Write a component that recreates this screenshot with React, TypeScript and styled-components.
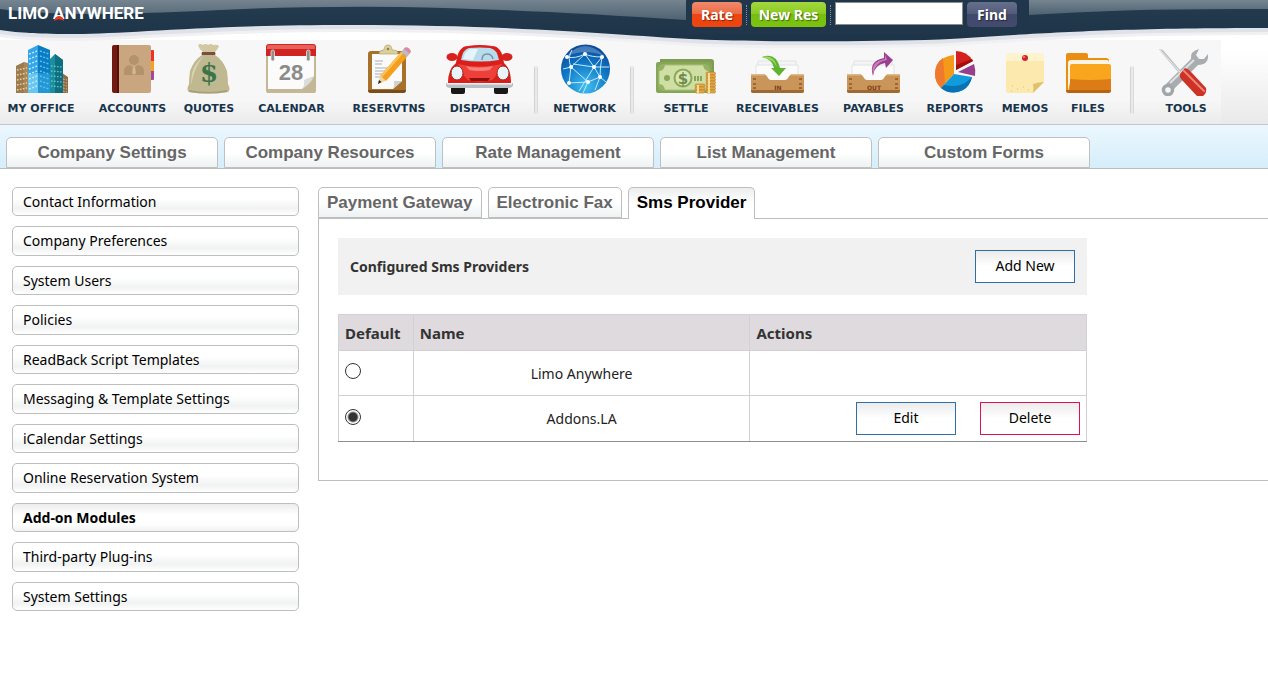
import React, { useState } from "react";
import styled, { createGlobalStyle, css } from "styled-components";

const uiFont = `"Noto Sans", "Open Sans", sans-serif`;
const headingFont = `"Liberation Sans", Arial, sans-serif`;
const labelFont = `"DejaVu Sans", Verdana, sans-serif`;

const GlobalStyle = createGlobalStyle`
  *, *::before, *::after { box-sizing: border-box; }
  body {
    margin: 0;
    background: #fff;
    color: #000;
    font-family: ${uiFont};
    font-size: 14px;
    overflow-x: hidden;
  }
  a { color: inherit; text-decoration: none; }
`;

/* ---------- header ---------- */

const Header = styled.header`
  position: relative;
  background: linear-gradient(#fff 0, #fff 50px, #e9e9e9 100%);
  border-bottom: 1px solid #c6c6c6;
`;

const Wave = styled.svg`
  position: absolute;
  top: 0;
  left: 0;
  width: 100%;
  height: 52px;
  pointer-events: none;
`;

const TopBar = styled.div`
  position: relative;
  z-index: 1;
  display: grid;
  grid-template-columns: 686px 343px 1fr;
  height: 40px;
`;

const Logo = styled.a`
  justify-self: start;
  align-self: start;
  display: flex;
  padding: 2px 8px;
  font: bold 17px/22px Roboto, ${headingFont};
  color: #fff;
  white-space: pre;
`;

const LogoA = styled.span`
  position: relative;
  svg {
    position: absolute;
    left: 0;
    bottom: 3px;
    width: 12px;
    height: 6px;
  }
`;

const QuickBar = styled.form`
  display: flex;
  align-items: flex-start;
  gap: 4px;
  margin: 0;
  height: 34px;
  padding: 2px 12px 0 6px;
  background: #20374b;
  border-radius: 4px 4px 0 0;
`;

const tones = {
  red: "linear-gradient(#f08a6c 0, #ec6a45 48%, #ea4613 50%, #ee4410 100%)",
  green: "linear-gradient(#a3d83f 0, #8acb22 48%, #76bd10 50%, #7cc40f 100%)",
  navy: "linear-gradient(#66708a 0, #525b7c 48%, #41496b 50%, #424a6e 100%)",
};

const QuickButton = styled.button<{ $tone: keyof typeof tones; $wide?: boolean }>`
  width: ${(p) => (p.$wide ? 75 : 50)}px;
  height: 25px;
  padding: 0;
  border: 0;
  border-radius: 4px;
  background: ${(p) => tones[p.$tone]};
  color: #fff;
  font: bold 14px/25px ${uiFont};
  text-shadow: 1px 1px 1px rgba(0, 0, 0, 0.45);
`;

const DottedRule = styled.span`
  width: 1px;
  height: 20px;
  margin-top: 3px;
  border-left: 1px dotted #8493a1;
`;

const SearchBox = styled.input`
  width: 128px;
  height: 23px;
  padding: 0 4px;
  border: 1px solid #8b8b8b;
  background: #fff;
  font: 14px ${uiFont};
`;

const MainNav = styled.nav`
  display: flex;
  width: 1221px;
  height: 84px;
  background: linear-gradient(#f7f7f7 0, #f7f7f7 60px, #ebebeb 100%);
`;

const NavGroup = styled.div<{ $before?: number }>`
  display: flex;
  gap: 17px;
  margin-left: ${(p) => p.$before ?? 0}px;
`;

const NavLink = styled.a<{ $width: number }>`
  display: flex;
  flex-direction: column;
  align-items: center;
  width: ${(p) => p.$width}px;
  font: bold 11px/26px ${labelFont};
  color: #17344c;
  white-space: nowrap;
  svg { flex: none; height: 56px; display: block; }
`;

const NavRule = styled.span<{ $before: number }>`
  width: 4px;
  height: 48px;
  margin: 26px 0 0 ${(p) => p.$before}px;
  border-radius: 2px;
  background: linear-gradient(90deg, #bdbdbd, #f2f2f2 50%, #c9c9c9);
  opacity: 0.8;
`;

/* ---------- section tabs ---------- */

const SectionTabs = styled.nav`
  display: flex;
  gap: 6px;
  padding: 12px 6px 0;
  background: linear-gradient(#ebf7fe, #d5eefb);
  border-bottom: 1px solid #bcbcbc;
`;

const SectionTab = styled.a`
  width: 212px;
  height: 31px;
  border: 1px solid #c0c0c0;
  border-radius: 5px 5px 0 0;
  background: linear-gradient(#fff 50%, #eef2f2);
  font: bold 17px/30px ${headingFont};
  color: #666;
  text-align: center;
`;

/* ---------- body ---------- */

const Columns = styled.div`
  display: flex;
  align-items: flex-start;
  gap: 19px;
  padding: 18px 0 0 12px;
`;

const SideMenu = styled.nav`
  flex: none;
  display: flex;
  flex-direction: column;
  gap: 10px;
  width: 287px;
`;

const SideLink = styled.a<{ $active?: boolean }>`
  padding: 0 10px;
  border: 1px solid #bebebe;
  border-radius: 5px;
  background: linear-gradient(#fff 40%, #f1f2f2 75%, #fff);
  line-height: 27px;
  &:nth-child(even) { line-height: 28px; }
  ${(p) =>
    p.$active &&
    css`
      font-weight: bold;
      background: linear-gradient(#ececec, #fff 40%, #fff 75%, #f1f1f1);
    `}
`;

const Content = styled.main`
  flex: 1;
  min-width: 0;
`;

const TabRow = styled.div`
  display: flex;
  gap: 6px;
`;

const ModuleTab = styled.button<{ $active?: boolean }>`
  height: 31px;
  padding: 0 8px;
  border: 1px solid #bebebe;
  border-radius: 5px 5px 0 0;
  background: ${(p) =>
    p.$active ? "linear-gradient(#eceeee, #fff 50%)" : "linear-gradient(#fff 50%, #eef2f2)"};
  font: bold 17px/28px ${headingFont};
  color: ${(p) => (p.$active ? "#000" : "#666")};
  ${(p) =>
    p.$active &&
    css`
      position: relative;
      height: 32px;
      margin-bottom: -1px;
      padding-bottom: 2px;
      border-bottom: 0;
    `}
`;

const Panel = styled.section`
  border: 1px solid #bebebe;
  border-right: 0;
  padding: 19px 19px 38px;
`;

const PanelBody = styled.div`
  max-width: 749px;
`;

const TitleBar = styled.div`
  display: flex;
  align-items: center;
  justify-content: space-between;
  padding: 12px;
  margin-bottom: 19px;
  background: #f1f1f1;
`;

const Title = styled.h2`
  margin: 0;
  font-size: 14px;
  color: #333;
`;

const ActionButton = styled.button<{ $danger?: boolean }>`
  width: 100px;
  height: 33px;
  padding: 0 0 2px;
  border: 1px solid ${(p) => (p.$danger ? "#dc1159" : "#2f6fa3")};
  background: linear-gradient(#ebebeb, #fff 50%);
  font: 14px ${uiFont};
  color: #000;
`;

const Table = styled.table`
  width: 100%;
  table-layout: fixed;
  border-collapse: collapse;
`;

const HeadCell = styled.th<{ $narrow?: boolean }>`
  width: ${(p) => (p.$narrow ? "10%" : "45%")};
  height: 36px;
  padding: 0 6px;
  border: 1px solid #d2d2d5;
  background: #dfdadd;
  color: #333;
  font-size: 15px;
  text-align: left;
`;

const Cell = styled.td<{ $center?: boolean }>`
  height: 45px;
  padding: 6px;
  border: 1px solid #d2d2d2;
  color: #222;
  text-align: ${(p) => (p.$center ? "center" : "left")};
  tr:last-child > & { border-bottom-color: #8e8e8e; }
`;

const Actions = styled.div`
  display: flex;
  justify-content: flex-end;
  gap: 24px;
`;

const Radio = styled.input`
  display: block;
  appearance: none;
  width: 16px;
  height: 16px;
  margin: 0 0 4px;
  border: 1px solid #333;
  border-radius: 50%;
  background: #fff;
  &:checked { background: radial-gradient(circle, #333 4px, #fff 6px); }
`;

/* ---------- icons ---------- */

const windowRows = [0, 1, 2, 3, 4, 5, 6, 7];

const OfficeIcon = () => (
  <svg width="60" viewBox="11 40 60 56" aria-hidden="true">
    <path d="M16 66 24 62 28 63V93H16Z" fill="#a98759" />
    <path d="M16 66 24 62V93H16Z" fill="#8f6f45" opacity=".5" />
    <path d="M62 73 68 77V93H62Z" fill="#8d6d47" />
    <path d="M50 59 55 54 63 60V93H50Z" fill="#1c8f9c" />
    <path d="M55 54 63 60V93H55Z" fill="#0f6f80" />
    <path d="M28 50 38 45V93H28Z" fill="#35a6e8" />
    <path d="M38 45 50 50V93H38Z" fill="#0a7cc4" />
    <path d="M28 74 38 73V93H28Z" fill="#7fd4f5" opacity=".7" />
    <path d="M38 73 50 74V93H38Z" fill="#2fa3dd" opacity=".7" />
    {windowRows.map((i) => (
      <g key={i} strokeDasharray="2 1.4" strokeWidth="1.4" fill="none">
        <path d={`M29 ${54 + i * 5} 37 ${51 + i * 5}`} stroke="#c4ecfb" />
        <path d={`M40 ${51 + i * 5} 49 ${54 + i * 5}`} stroke="#5fc2ee" />
      </g>
    ))}
    {[0, 1, 2, 3, 4].map((i) => (
      <g key={i} strokeDasharray="1.6 1.4" strokeWidth="1.3">
        <path d={`M17 ${70 + i * 5} 27 ${68 + i * 5}`} stroke="#ecd7a8" />
        <path d={`M51 ${66 + i * 5} 62 ${67 + i * 5}`} stroke="#63c6c8" />
        <path d={`M63 ${79 + i * 3} 67 ${80 + i * 3}`} stroke="#d9bf8e" strokeWidth="1" />
      </g>
    ))}
  </svg>
);

const AccountsIcon = () => (
  <svg width="60" viewBox="103 40 60 56" aria-hidden="true">
    <path d="M149 50h4q1 0 1 1v10h-5Z" fill="#ee2f2a" />
    <path d="M149 61h5v10h-5Z" fill="#f6a31c" />
    <path d="M149 71h5v8q0 1-1 1h-4Z" fill="#a04a9c" />
    <path d="M118 45h31q2 0 2 2v44q0 2-2 2h-31Z" fill="#c9a680" />
    <path d="M114 45h5v48h-5q-2 0-2-2V47q0-2 2-2Z" fill="#731a13" />
    <path d="M117 45h2v48h-2Z" fill="#54100c" />
    <circle cx="134" cy="60" r="5" fill="#b3936b" />
    <path d="M124 75v-4q0-5 6-6l4 3 4-3q6 1 6 6v4Z" fill="#b3936b" />
    <path d="m133 67-1 6 2 2 2-2-1-6Z" fill="#d2b690" />
  </svg>
);

const QuotesIcon = () => (
  <svg width="60" viewBox="179 40 60 56" aria-hidden="true">
    <path d="M198 45q3-2 5 0 3-2 5 0 3-2 5 0 4-1 6 1-1 3-4 6h-12q-4-3-5-7Z" fill="#cfc8a0" />
    <path d="M202 55h13q8 5 12 16 1 8 1 13 3 6 0 8-19 3-39 0-3-2 0-8 0-6 1-13 4-11 12-16Z" fill="#bfb890" />
    <path d="M204 56q-9 6-12 17-1 8-1 12 4-20 13-29Z" fill="#d8d2ae" />
    <path d="M189 90q20 4 38 0v2q-19 3-38 0Z" fill="#a79f75" />
    <path d="M202 52h13q1 2 0 3h-13q-1-1 0-3Z" fill="#7d4d3e" />
    <text x="209" y="82" textAnchor="middle" fontFamily="DejaVu Serif" fontWeight="bold" fontSize="26" fill="#3c7348">$</text>
  </svg>
);

const CalendarIcon = () => (
  <svg width="60" viewBox="262 40 60 56" aria-hidden="true">
    <path d="M266 52h50v39q0 2-2 2h-46q-2 0-2-2Z" fill="#c3b795" />
    <path d="M268 56h46v20l-12 13h-34Z" fill="#fbfbfb" />
    <path d="M302 89q3-4 2-9 4-2 10-4Q311 84 302 89Z" fill="#dcdcdc" />
    <path d="M266 56V47q0-3 3-3h44q3 0 3 3v9Z" fill="#cf2421" />
    <path d="M267 49v-2q0-2 2-2h44q2 0 2 2v2Z" fill="#e8605a" />
    <g fill="#8f8f8f" stroke="#f2f2f2" strokeWidth=".7">
      <rect x="271" y="50" width="3.5" height="11" rx="1.7" />
      <rect x="306.500" y="50" width="3.500" height="11" rx="1.7" />
    </g>
    <text x="291" y="80" textAnchor="middle" fontFamily="Liberation Sans" fontWeight="bold" fontSize="22" fill="#8b8b8b">28</text>
  </svg>
);

const ReservationsIcon = () => (
  <svg width="60" viewBox="358 40 60 56" aria-hidden="true">
    <rect x="367" y="51" width="38" height="42" rx="3" fill="#a8712b" />
    <path d="M367 90h38q0 3-3 3h-32q-3 0-3-3Z" fill="#7a4c17" />
    <path d="M371 54h30v27l-9 8h-21Z" fill="#fafafa" />
    <path d="M392 89q2-4 1-8h8Z" fill="#cfcfcf" />
    <path d="M374 61h8M374 64h7M374 68h14M374 71h12M374 74h10M374 77h6" stroke="#a9adb3" />
    <path d="M378 54q0-4 4-4h1q0-5 4-5t4 5h2q4 0 4 4Z" fill="#dccf9b" stroke="#a99b62" strokeWidth=".6" />
    <circle cx="387" cy="49" r="1.300" fill="#8e8252" />
    <path d="m379 76 21-24 6 5-21 24Z" fill="#f59f1f" />
    <path d="m379 76 21-24 2 1.600-21 24Z" fill="#fbc35a" />
    <path d="m400 52 2.500-3 6 5-2.500 3Z" fill="#b9bcc4" />
    <path d="m402.500 49 1.500-1.500q4-1 6 4l-1.500 2.500Z" fill="#d98aa0" />
    <path d="m379 76 6 5-8 3Z" fill="#f0d3a2" />
    <path d="m378 80 2.500 2-3.500 2Z" fill="#222" />
  </svg>
);

const DispatchIcon = () => (
  <svg width="70" viewBox="445 40 70 56" aria-hidden="true">
    <rect x="451" y="86" width="14" height="8" rx="2" fill="#181818" />
    <rect x="494" y="86" width="14" height="8" rx="2" fill="#181818" />
    <ellipse cx="452" cy="57" rx="5.500" ry="4" fill="#d8231d" />
    <ellipse cx="507" cy="57" rx="5.500" ry="4" fill="#d8231d" />
    <path d="M456 63Q458 46 468 46q12-2 24 0 10 0 12 17 7 6 7 20H448q0-14 8-20Z" fill="#da1f1b" />
    <path d="M461 60q2-11 8-12 11-1 21 0 7 1 9 12-19 3-38 0Z" fill="#b7dcec" />
    <path d="M463 59q2-8 7-10h8l-5 11Z" fill="#e6f5fa" />
    <path d="M482 60q0-6 5-6t6 5" fill="none" stroke="#7894a3" strokeWidth="1.500" />
    <path d="M458 64q21 5 44 0-5 12-10 16-12 3-24 0-6-5-10-16Z" fill="#ee4038" />
    <path d="M466 66q13 3 27 0l-3 4q-11 2-21 0Z" fill="#f6817a" />
    <ellipse cx="457" cy="73" rx="6" ry="7" fill="#e9f4f8" stroke="#a3241f" />
    <ellipse cx="503" cy="73" rx="6" ry="7" fill="#e9f4f8" stroke="#a3241f" />
    <path d="M469 78h21l-2 3h-17Z" fill="#8c100e" />
    <path d="M446 83h67v3q-2 2-4 2h-59q-3 0-4-2Z" fill="#b9bfc4" />
    <path d="M447 83h65v1.500h-65Z" fill="#f3f5f6" />
  </svg>
);

const NetworkIcon = () => (
  <svg width="60" viewBox="554 40 60 56" aria-hidden="true">
    <defs>
      <radialGradient id="globe" cx=".5" cy=".85" r=".8">
        <stop offset="0" stopColor="#42c0f0" />
        <stop offset=".6" stopColor="#0f76c4" />
        <stop offset="1" stopColor="#0a4d9c" />
      </radialGradient>
    </defs>
    <circle cx="584.500" cy="69" r="24.500" fill="url(#globe)" />
    <path
      d="M566 57q8 2 18-3 6 3 17 3M584 54l-14 13-8 2M584 54l9 13 6 10-12 5-17-15M593 67l-21-3M601 57l-8 10 15 0M570 67l-2 16 19-1M587 82l-5 11M599 77l6 5M571 50q-5 8-1 17M593 67l-15 24M599 77l-5 13M601 57q-2 10-2 20"
      fill="none"
      stroke="#c4e8fb"
      strokeWidth="1"
    />
    {[[584, 54], [570, 67], [593, 67], [599, 77], [587, 82], [601, 57], [568, 83], [566, 57]].map(([x, y]) => (
      <circle key={`${x}-${y}`} cx={x} cy={y} r="2" fill="#fff" />
    ))}
    <path d="M566 56q18-20 37 0-18-8-37 0Z" fill="#fff" opacity=".25" />
  </svg>
);

const SettleIcon = () => (
  <svg width="60" viewBox="655 40 60 56" aria-hidden="true">
    <path d="M659 59h51q3 0 3 3v21h-5V64h-49Z" fill="#7f9c50" />
    <rect x="655" y="62" width="56" height="31" rx="2" fill="#86a556" />
    <rect x="658" y="65" width="50" height="25" rx="3" fill="#cfdfa3" stroke="#a9c07a" />
    <path d="M658 71q5 0 6-6h-6ZM708 71q-5 0-6-6h6ZM658 84q5 0 6 6h-6Z" fill="#95b163" />
    <circle cx="682" cy="78" r="9.500" fill="#8aa75c" />
    <circle cx="682" cy="78" r="7.500" fill="#d9e7b6" />
    <text x="682" y="84" textAnchor="middle" fontFamily="DejaVu Sans" fontSize="15" fill="#6f8b45">$</text>
    <circle cx="666" cy="78" r="3" fill="#86a556" />
    <path d="M694 76v5M697 76v5M700 76v5" stroke="#86a556" strokeWidth="2" />
    <g fill="#e2a845" stroke="#b77a22" strokeWidth=".6">
      {[84, 87, 90].map((y) => <rect key={y} x="694" y={y} width="10" height="3" rx="1.500" />)}
      {[72, 75, 78, 81, 84, 87, 90].map((y) => <rect key={y} x="705" y={y} width="9.500" height="3" rx="1.500" />)}
    </g>
    <path d="M697 85v8M708 73v20" stroke="#f9dc95" strokeWidth="2" />
  </svg>
);

const TrayBase = ({ x }: { x: number }) => (
  <g transform={`translate(${x} 0)`}>
    <path d="M7 61h38v20H7Z" fill="#f4f4f4" stroke="#dfe2e4" />
    <path d="M5 65h42v16H5Z" fill="#fbfbfb" stroke="#dfe2e4" />
    <path d="M0 74h12q3 0 5 4 1 2 3 2h14q2 0 3-2 2-4 5-4h11v17q0 2-2 2H2q-2 0-2-2Z" fill="#c99558" />
    <path d="M0 74h12l2 1.500H0ZM53 74H41l-2 1.500h14Z" fill="#e2ba83" />
    <path d="M0 90h53v1q0 2-2 2H2q-2 0-2-2Z" fill="#9d6a34" />
    <path d="M2 79h3M2 84h3M2 88h3M48 79h3M48 84h3M48 88h3" stroke="#8a5a2a" strokeWidth="1.500" />
  </g>
);

const ReceivablesIcon = () => (
  <svg width="60" viewBox="747 40 60 56" aria-hidden="true">
    <TrayBase x={750} />
    <path d="M761 57q14-5 18 11h6l-7 8-8-8h3q-2-9-12-11Z" fill="#5fb331" />
    <path d="M761 57q12-3 15 10-4-8-15-10Z" fill="#9bdb66" />
    <text x="777" y="90" textAnchor="middle" fontFamily="DejaVu Sans" fontWeight="bold" fontSize="6" fill="#7c3c1c">IN</text>
  </svg>
);

const PayablesIcon = () => (
  <svg width="60" viewBox="843 40 60 56" aria-hidden="true">
    <TrayBase x={846} />
    <path d="M872 76q-5-15 11-18v-6l9 8-7 8-1-5q-11 2-12 13Z" fill="#9a3f8d" />
    <path d="M872 74q-3-12 12-15v-5l2 6q-11 1-14 14Z" fill="#c880bd" />
    <text x="873" y="90" textAnchor="middle" fontFamily="DejaVu Sans" fontWeight="bold" fontSize="6" fill="#7c3c1c">OUT</text>
  </svg>
);

const ReportsIcon = () => (
  <svg width="60" viewBox="925 40 60 56" aria-hidden="true">
    <path d="M954 55v19l-13 14q-6-6-6-14 1-17 19-19Z" fill="#f49a1a" />
    <path d="M943 58q-8 5-8 16 0 8 6 14l4-5Z" fill="#ef7a2d" />
    <path d="m954 74 18 3q-2 9-9 13-12 6-22-2Z" fill="#0f9bdc" />
    <path d="m944 85-3 3q10 8 22 2 7-4 9-13-10 12-28 8Z" fill="#0872b4" />
    <path d="M956 70V51q11 0 17 10Z" fill="#d4201f" />
    <path d="m956 70 17-9-1-2-16 6Z" fill="#a3100f" />
    <path d="m958 72 16-8q2 6 1 12Z" fill="#963f8b" />
  </svg>
);

const MemosIcon = () => (
  <svg width="60" viewBox="994 40 60 56" aria-hidden="true">
    <path d="M1007 53h34q2 0 2 2v27l-11 11h-25q-2 0-2-2V55q0-2 2-2Z" fill="#fbe9ae" />
    <path d="M1005 61v-6q0-2 2-2h34q2 0 2 2v6Z" fill="#fdf4cf" />
    <path d="M1032 93q1-5 0-9 6-2 11-2Z" fill="#e3c06d" />
    <path d="M1011 86h1M1016 89h1M1022 87h1M1027 90h1M1010 91h1" stroke="#dcbc6f" strokeWidth="1" />
    <circle cx="1024" cy="58" r="3" fill="#d2232a" />
    <circle cx="1023" cy="57" r="1" fill="#f6898b" />
  </svg>
);

const FilesIcon = () => (
  <svg width="60" viewBox="1058 40 60 56" aria-hidden="true">
    <path d="M1066 55q0-2 2-2h18q2 0 2 2v3h18q3 0 3 3v31h-41q-2 0-2-2Z" fill="#e98d13" />
    <path d="M1068 92V63q0-3 3-3h36q2 0 2 3v4l-36 1Z" fill="#fbf4e4" />
    <path d="M1070 66q0-2 2-2h37q2 0 2 2v24q0 2-2 2h-39Z" fill="#f9a51d" />
    <path d="M1070 79q20 2 41 0v11q0 2-2 2h-39Z" fill="#dc7c16" />
    <path d="M1066 90h45q0 3-2 3h-41q-2 0-2-3Z" fill="#b96210" />
  </svg>
);

const ToolsIcon = () => (
  <svg width="60" viewBox="1156 40 60 56" aria-hidden="true">
    <path d="m1166 84 25-25q-1-8 8-10l-3 6 3 4 5 0 4-5q1 11-10 11l-25 25Z" fill="#a9adb0" />
    <path d="m1170 83 24-23" stroke="#dfe1e2" strokeWidth="2" />
    <circle cx="1168" cy="90" r="4.500" fill="none" stroke="#a2a6a9" strokeWidth="3.500" />
    <path d="m1159 49 4 1 18 21-2 2-18-21Z" fill="#bfc3c5" />
    <path d="m1160 50 20 22" stroke="#e9ebec" strokeWidth="1" />
    <path d="m1180 74 5-6q4 1 7 5l14 15q1 5-3 8-4 2-7-1l-14-15q-3-3-2-6Z" fill="#cc3226" />
    <path d="m1184 71 20 20" stroke="#f08377" strokeWidth="2" strokeLinecap="round" />
  </svg>
);

/* ---------- data ---------- */

type NavItem = { label: string; width: number; Icon: () => React.JSX.Element };

const workItems: NavItem[] = [
  { label: "MY OFFICE", width: 82, Icon: OfficeIcon },
  { label: "ACCOUNTS", width: 67, Icon: AccountsIcon },
  { label: "QUOTES", width: 52, Icon: QuotesIcon },
  { label: "CALENDAR", width: 79, Icon: CalendarIcon },
  { label: "RESERVTNS", width: 82, Icon: ReservationsIcon },
  { label: "DISPATCH", width: 66, Icon: DispatchIcon },
];
const networkItems: NavItem[] = [{ label: "NETWORK", width: 65, Icon: NetworkIcon }];
const moneyItems: NavItem[] = [
  { label: "SETTLE", width: 60, Icon: SettleIcon },
  { label: "RECEIVABLES", width: 89, Icon: ReceivablesIcon },
  { label: "PAYABLES", width: 69, Icon: PayablesIcon },
  { label: "REPORTS", width: 60, Icon: ReportsIcon },
  { label: "MEMOS", width: 46, Icon: MemosIcon },
  { label: "FILES", width: 46, Icon: FilesIcon },
];
const toolItems: NavItem[] = [{ label: "TOOLS", width: 42, Icon: ToolsIcon }];

const sections = ["Company Settings", "Company Resources", "Rate Management", "List Management", "Custom Forms"];
const settingsPages = [
  "Contact Information",
  "Company Preferences",
  "System Users",
  "Policies",
  "ReadBack Script Templates",
  "Messaging & Template Settings",
  "iCalendar Settings",
  "Online Reservation System",
  "Add-on Modules",
  "Third-party Plug-ins",
  "System Settings",
];
const modules = ["Payment Gateway", "Electronic Fax", "Sms Provider"];
const providers = [
  { name: "Limo Anywhere", editable: false },
  { name: "Addons.LA", editable: true },
];

const waveEdge =
  "C20 33 40 34 75 34 C130 34 200 25 350 25 C520 25 620 35 690 39 C750 42 860 42 940 39.500 C1020 35 1090 28 1268 28";

const NavItems = ({ items, before }: { items: NavItem[]; before?: number }) => (
  <NavGroup $before={before}>
    {items.map(({ label, width, Icon }) => (
      <NavLink key={label} href="#" $width={width}>
        <Icon />
        {label}
      </NavLink>
    ))}
  </NavGroup>
);

export default function App() {
  const [selected, setSelected] = useState("Addons.LA");
  return (
    <>
      <GlobalStyle />
      <Header>
        <Wave viewBox="0 0 1268 52" preserveAspectRatio="none" aria-hidden="true">
          <defs>
            <linearGradient id="sheen" x1="0" y1="0" x2="0" y2="1">
              <stop offset="0" stopColor="#75848f" />
              <stop offset="1" stopColor="#4e6273" />
            </linearGradient>
            <linearGradient id="deep" x1="0" y1="0" x2="0" y2="1">
              <stop offset="0" stopColor="#253d50" />
              <stop offset="1" stopColor="#1d3347" />
            </linearGradient>
          </defs>
          <path d={`M0 30 ${waveEdge}`} fill="none" stroke="#f1f1f3" strokeWidth="14" />
          <path d={`M0 30 ${waveEdge}`} fill="none" stroke="#dfe2e9" strokeWidth="8" />
          <path d={`M0 0V30 ${waveEdge}V0Z`} fill="url(#deep)" />
          <path d="M0 0V9Q30 13 75 14 Q140 14 220 10 T400 7 Q520 9 686 20V0Z" fill="url(#sheen)" />
          <path d="M1029 0V15Q1130 8 1268 9V0Z" fill="url(#sheen)" />
        </Wave>
        <TopBar>
          <Logo href="#">
            {"LIMO "}
            <LogoA>
              A
              <svg viewBox="0 0 12 7" aria-hidden="true">
                <path d="M0 7Q1 2 6 1 11 2 12 7 6 3 0 7Z" fill="#e23b22" />
              </svg>
            </LogoA>
            NYWHERE
          </Logo>
          <QuickBar onSubmit={(e) => e.preventDefault()}>
            <QuickButton type="button" $tone="red">Rate</QuickButton>
            <DottedRule />
            <QuickButton type="button" $tone="green" $wide>New Res</QuickButton>
            <DottedRule />
            <SearchBox type="text" aria-label="Find reservation" />
            <QuickButton type="submit" $tone="navy">Find</QuickButton>
          </QuickBar>
        </TopBar>
        <MainNav aria-label="Main">
          <NavItems items={workItems} />
          <NavRule $before={21} />
          <NavItems items={networkItems} before={14} />
          <NavRule $before={13} />
          <NavItems items={moneyItems} before={22} />
          <NavRule $before={19} />
          <NavItems items={toolItems} before={31} />
        </MainNav>
      </Header>

      <SectionTabs aria-label="Sections">
        {sections.map((s) => (
          <SectionTab key={s} href="#">{s}</SectionTab>
        ))}
      </SectionTabs>

      <Columns>
        <SideMenu aria-label="Settings">
          {settingsPages.map((p) => (
            <SideLink key={p} href="#" $active={p === "Add-on Modules"}>{p}</SideLink>
          ))}
        </SideMenu>
        <Content>
          <TabRow role="tablist">
            {modules.map((m) => (
              <ModuleTab key={m} type="button" role="tab" aria-selected={m === "Sms Provider"} $active={m === "Sms Provider"}>
                {m}
              </ModuleTab>
            ))}
          </TabRow>
          <Panel>
            <PanelBody>
              <TitleBar>
                <Title>Configured Sms Providers</Title>
                <ActionButton type="button">Add New</ActionButton>
              </TitleBar>
              <Table>
                <thead>
                  <tr>
                    <HeadCell $narrow>Default</HeadCell>
                    <HeadCell>Name</HeadCell>
                    <HeadCell>Actions</HeadCell>
                  </tr>
                </thead>
                <tbody>
                  {providers.map(({ name, editable }) => (
                    <tr key={name}>
                      <Cell>
                        <Radio
                          type="radio"
                          name="default-provider"
                          aria-label={name}
                          checked={selected === name}
                          onChange={() => setSelected(name)}
                        />
                      </Cell>
                      <Cell $center>{name}</Cell>
                      <Cell>
                        {editable && (
                          <Actions>
                            <ActionButton type="button">Edit</ActionButton>
                            <ActionButton type="button" $danger>Delete</ActionButton>
                          </Actions>
                        )}
                      </Cell>
                    </tr>
                  ))}
                </tbody>
              </Table>
            </PanelBody>
          </Panel>
        </Content>
      </Columns>
    </>
  );
}
